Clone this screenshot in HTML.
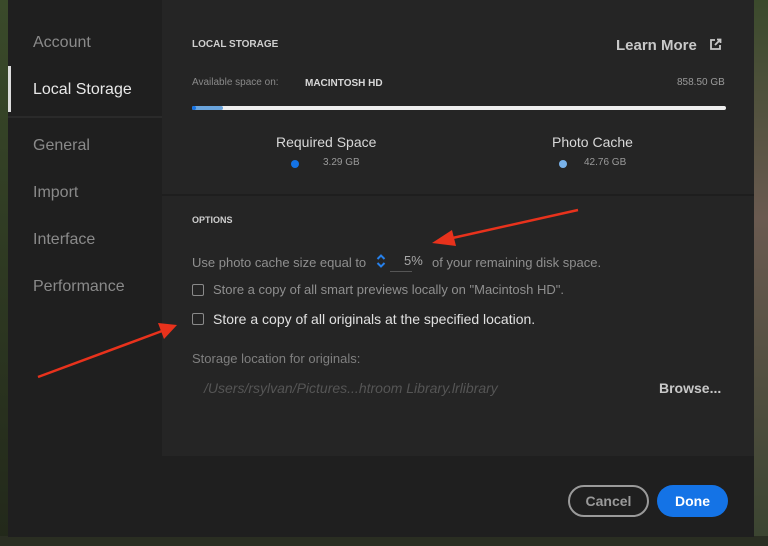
<!DOCTYPE html>
<html><head><style>
*{margin:0;padding:0;box-sizing:border-box}
body{width:768px;height:546px;overflow:hidden;background:#2b3222;font-family:"Liberation Sans",sans-serif;position:relative}
.bg1{position:absolute;left:0;top:0;width:8px;height:546px;background:linear-gradient(#3a4a2a,#22281a)}
.bg2{position:absolute;right:0;top:0;width:14px;height:546px;background:linear-gradient(#3b4a2c,#6a5a50 40%,#3a4430)}
.bg3{position:absolute;left:0;top:536px;width:768px;height:10px;background:#2a2e22}
.dlg{position:absolute;left:8px;top:0;width:746px;height:537px;background:#1f1f1f}
.panel{position:absolute;left:162px;top:0;width:592px;height:456px;background:#252525}
.div{position:absolute;left:162px;top:194px;width:592px;height:2px;background:#1e1e1e}
.t{position:absolute;white-space:nowrap}
.nav{font-size:16px;color:#8a8a8a;left:33px}
</style></head><body>
<div class="bg1"></div><div class="bg2"></div><div class="bg3"></div>
<div class="dlg"></div>
<div class="panel"></div>
<div class="div"></div>
<div style="position:absolute;left:8px;top:66px;width:3px;height:46px;background:#ddd"></div>
<div style="position:absolute;left:8px;top:116px;width:154px;height:2px;background:#2a2a2a"></div>
<div class="t nav" style="top:34px">Account</div>
<div class="t nav" style="top:81px;color:#e8e8e8">Local Storage</div>
<div class="t nav" style="top:137px">General</div>
<div class="t nav" style="top:184px">Import</div>
<div class="t nav" style="top:231px">Interface</div>
<div class="t nav" style="top:278px">Performance</div>

<div class="t" style="left:192px;top:39px;font-size:10px;font-weight:bold;color:#cfcfcf">LOCAL STORAGE</div>
<div class="t" style="left:616px;top:37px;font-size:15px;font-weight:bold;color:#c8c8c8">Learn More</div>
<svg style="position:absolute;left:709px;top:38px" width="13" height="13" viewBox="0 0 13 13"><path d="M6 2H2v9h9V7" fill="none" stroke="#c8c8c8" stroke-width="1.8"/><path d="M6 7l5-5M8 1.5h3.5V5" fill="none" stroke="#c8c8c8" stroke-width="1.8"/></svg>
<div class="t" style="left:192px;top:77px;font-size:10px;color:#8a8a8a">Available space on:</div>
<div class="t" style="left:305px;top:78px;font-size:10px;font-weight:bold;color:#d8d8d8">MACINTOSH HD</div>
<div class="t" style="left:677px;top:77px;font-size:10px;color:#9a9a9a">858.50 GB</div>
<div style="position:absolute;left:192px;top:106px;width:534px;height:4px;background:#eee;border-radius:2px"></div>
<div style="position:absolute;left:192px;top:106px;width:31px;height:4px;background:#6aa4dc;border-radius:2px"></div>
<div style="position:absolute;left:192px;top:106px;width:4px;height:4px;background:#1473e6;border-radius:2px"></div>
<div class="t" style="left:276px;top:134px;font-size:14px;color:#d8d8d8">Required Space</div>
<div style="position:absolute;left:291px;top:160px;width:8px;height:8px;border-radius:50%;background:#1473e6"></div>
<div class="t" style="left:323px;top:157px;font-size:10px;color:#9a9a9a">3.29 GB</div>
<div class="t" style="left:552px;top:134px;font-size:14px;color:#d8d8d8">Photo Cache</div>
<div style="position:absolute;left:559px;top:160px;width:8px;height:8px;border-radius:50%;background:#79b2ea"></div>
<div class="t" style="left:584px;top:157px;font-size:10px;color:#9a9a9a">42.76 GB</div>

<div class="t" style="left:192px;top:215px;font-size:9px;font-weight:bold;color:#cfcfcf">OPTIONS</div>
<div class="t" style="left:192px;top:255px;font-size:13px;color:#8f8f8f">Use photo cache size equal to</div>
<svg style="position:absolute;left:376px;top:253px" width="10" height="16" viewBox="0 0 10 16"><path d="M1.5 6L5 2.5 8.5 6M1.5 10L5 13.5 8.5 10" fill="none" stroke="#2680eb" stroke-width="2"/></svg>
<div class="t" style="left:404px;top:253px;font-size:13px;color:#a8a8a8">5%</div>
<div style="position:absolute;left:390px;top:271px;width:22px;height:1px;background:#555"></div>
<div class="t" style="left:432px;top:255px;font-size:13px;color:#8f8f8f">of your remaining disk space.</div>
<div style="position:absolute;left:192px;top:284px;width:12px;height:12px;border:1.5px solid #8a8a8a;border-radius:2px"></div>
<div class="t" style="left:213px;top:282px;font-size:13px;color:#8f8f8f">Store a copy of all smart previews locally on "Macintosh HD".</div>
<div style="position:absolute;left:192px;top:313px;width:12px;height:12px;border:1.5px solid #8a8a8a;border-radius:2px"></div>
<div class="t" style="left:213px;top:311px;font-size:14px;color:#e0e0e0">Store a copy of all originals at the specified location.</div>
<div class="t" style="left:192px;top:351px;font-size:13px;color:#7f7f7f">Storage location for originals:</div>
<div class="t" style="left:204px;top:380px;font-size:14px;font-style:italic;color:#555">/Users/rsylvan/Pictures...htroom Library.lrlibrary</div>
<div class="t" style="left:659px;top:380px;font-size:14px;font-weight:bold;color:#c8c8c8">Browse...</div>

<div style="position:absolute;left:568px;top:485px;width:81px;height:32px;border:2px solid #9a9a9a;border-radius:16px;color:#9a9a9a;font-size:14px;font-weight:bold;text-align:center;line-height:28px">Cancel</div>
<div style="position:absolute;left:657px;top:485px;width:71px;height:32px;background:#1473e6;border-radius:16px;color:#fff;font-size:14px;font-weight:bold;text-align:center;line-height:32px">Done</div>

<svg style="position:absolute;left:0;top:0" width="768" height="546">
<g stroke="#e8321c" stroke-width="2.5" fill="#e8321c">
<line x1="578" y1="210" x2="448" y2="239"/>
<polygon points="432,243 452,230 456,246" stroke="none"/>
<line x1="38" y1="377" x2="162" y2="331"/>
<polygon points="177,325 158,323 164,339" stroke="none"/>
</g></svg>
</body></html>
